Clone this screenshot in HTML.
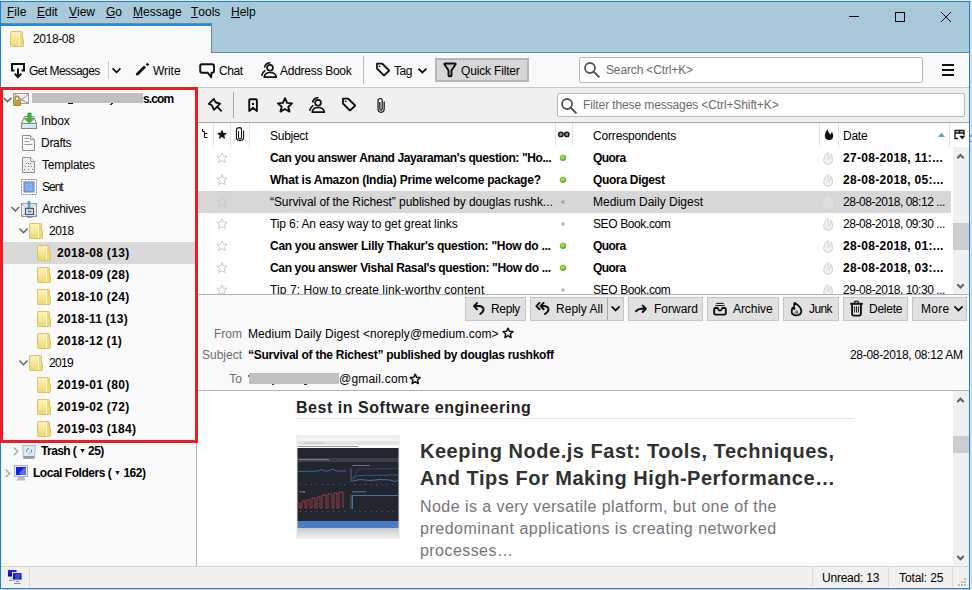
<!DOCTYPE html>
<html><head><meta charset="utf-8">
<style>
*{margin:0;padding:0;box-sizing:border-box}
html,body{width:972px;height:590px;overflow:hidden;background:#fff;font-family:"Liberation Sans",sans-serif;font-size:12px;color:#000}
.a{position:absolute}
.t{position:absolute;white-space:nowrap;line-height:14px;font-size:12px}
.b{font-weight:bold}
u{text-decoration:none;border-bottom:1px solid #000;display:inline-block;line-height:10px}
.tri{font-size:7px;vertical-align:2px}
</style></head><body>
<div class="a" style="left:0px;top:0px;width:972px;height:590px;background:#d9d9d9;"></div>
<div class="a" style="left:970px;top:0px;width:2px;height:590px;background:#dedede;"></div>
<div class="a" style="left:970px;top:135px;width:2px;height:2px;background:#5a9ad8;"></div>
<div class="a" style="left:970px;top:141px;width:2px;height:1px;background:#5a9ad8;"></div>
<div class="a" style="left:0px;top:0px;width:970px;height:1px;background:#e9e4df;"></div>
<div class="a" style="left:0px;top:1px;width:970px;height:588px;background:#1883d7;"></div>
<div class="a" style="left:0px;top:589px;width:972px;height:1px;background:#d6cfc8;"></div>
<div class="a" style="left:1px;top:587px;width:968px;height:1px;background:#faf6f1;"></div>
<div class="a" style="left:1px;top:2px;width:968px;height:50px;background:#a7c9da;"></div>
<div class="a" style="left:1px;top:23px;width:211px;height:1px;background:#6f8a99;"></div>
<div class="a" style="left:1px;top:24px;width:210px;height:2px;background:#2589e0;"></div>
<div class="a" style="left:1px;top:26px;width:210px;height:27px;background:#f9f9f9;"></div>
<div class="a" style="left:211px;top:23px;width:1px;height:30px;background:#6f8794;"></div>
<div class="a" style="left:211px;top:52px;width:758px;height:1px;background:#6f8794;"></div>
<div class="a" style="left:1px;top:53px;width:968px;height:34px;background:#f9f9f9;"></div>
<div class="a" style="left:108px;top:61px;width:1px;height:18px;background:#c9c9c9;"></div>
<div class="a" style="left:363px;top:56px;width:1px;height:28px;background:#bdbdbd;"></div>
<div class="a" style="left:435px;top:58px;width:94px;height:24px;background:#d7d7d7;border:2px solid #b6b6b6"></div>
<div class="a" style="left:579px;top:57px;width:344px;height:26px;background:#fff;border:1px solid #b9b9b9;border-radius:2px"></div>
<div class="a" style="left:942px;top:64px;width:12px;height:2px;background:#111;"></div>
<div class="a" style="left:942px;top:69px;width:12px;height:2px;background:#111;"></div>
<div class="a" style="left:942px;top:74px;width:12px;height:2px;background:#111;"></div>
<div class="a" style="left:1px;top:87px;width:195px;height:479px;background:#fafafa;"></div>
<div class="a" style="left:196px;top:87px;width:1px;height:479px;background:#a8b7c5;"></div>
<div class="a" style="left:3px;top:242px;width:192px;height:22px;background:#d9d9d9;"></div>
<div class="a" style="left:32px;top:93px;width:111px;height:10px;background:#c0c0c0;"></div>
<div class="a" style="left:68px;top:103px;width:5px;height:1px;background:#111;"></div>
<div class="a" style="left:111px;top:103px;width:2px;height:1px;background:#222;"></div>
<div class="a" style="left:110px;top:104px;width:2px;height:1px;background:#333;"></div>
<div class="a" style="left:197px;top:87px;width:772px;height:1px;background:#c9c9c9;"></div>
<div class="a" style="left:197px;top:88px;width:772px;height:34px;background:#f0f0f0;"></div>
<div class="a" style="left:233px;top:92px;width:1px;height:26px;background:#a3a3a3;"></div>
<div class="a" style="left:557px;top:93px;width:408px;height:24px;background:#fff;border:1px solid #b9b9b9;border-radius:2px"></div>
<div class="a" style="left:197px;top:122px;width:772px;height:1px;background:#a3a3a3;"></div>
<div class="a" style="left:197px;top:123px;width:772px;height:171px;background:#fff;"></div>
<div class="a" style="left:213px;top:123px;width:1px;height:24px;background:#e3e3e3;"></div>
<div class="a" style="left:230px;top:123px;width:1px;height:24px;background:#e3e3e3;"></div>
<div class="a" style="left:249px;top:123px;width:1px;height:24px;background:#e3e3e3;"></div>
<div class="a" style="left:555px;top:123px;width:1px;height:24px;background:#e3e3e3;"></div>
<div class="a" style="left:572px;top:123px;width:1px;height:24px;background:#e3e3e3;"></div>
<div class="a" style="left:819px;top:123px;width:1px;height:24px;background:#e3e3e3;"></div>
<div class="a" style="left:838px;top:123px;width:1px;height:24px;background:#e3e3e3;"></div>
<div class="a" style="left:949px;top:123px;width:1px;height:24px;background:#e3e3e3;"></div>
<div class="a" style="left:197px;top:191px;width:754px;height:22px;background:#d7d7d7;"></div>
<div class="a" style="left:953px;top:147px;width:16px;height:147px;background:#f0f0f0;"></div>
<div class="a" style="left:953px;top:223px;width:16px;height:27px;background:#cdcdcd;"></div>
<div class="a" style="left:197px;top:294px;width:772px;height:1px;background:#a8b7c5;"></div>
<div class="a" style="left:197px;top:295px;width:772px;height:95px;background:#f9f9f9;"></div>
<div class="a" style="left:465px;top:297px;width:61px;height:24px;background:#e1e1e1;border:1px solid #c6c6c6"></div>
<div class="a" style="left:530px;top:297px;width:94px;height:24px;background:#e1e1e1;border:1px solid #c6c6c6"></div>
<div class="a" style="left:628px;top:297px;width:75px;height:24px;background:#e1e1e1;border:1px solid #c6c6c6"></div>
<div class="a" style="left:707px;top:297px;width:72px;height:24px;background:#e1e1e1;border:1px solid #c6c6c6"></div>
<div class="a" style="left:783px;top:297px;width:56px;height:24px;background:#e1e1e1;border:1px solid #c6c6c6"></div>
<div class="a" style="left:843px;top:297px;width:65px;height:24px;background:#e1e1e1;border:1px solid #c6c6c6"></div>
<div class="a" style="left:912px;top:297px;width:55px;height:24px;background:#e1e1e1;border:1px solid #c6c6c6"></div>
<div class="a" style="left:607px;top:298px;width:1px;height:22px;background:#a8a8a8;"></div>
<div class="a" style="left:249px;top:373px;width:90px;height:11px;background:#c0c0c0;"></div>
<div class="a" style="left:272px;top:384px;width:2px;height:1px;background:#333;"></div>
<div class="a" style="left:304px;top:384px;width:3px;height:1px;background:#333;"></div>
<div class="a" style="left:248px;top:375px;width:1px;height:2px;background:#555;"></div>
<div class="a" style="left:197px;top:390px;width:772px;height:1px;background:#a8b7c5;"></div>
<div class="a" style="left:197px;top:391px;width:772px;height:175px;background:#fff;"></div>
<div class="a" style="left:953px;top:391px;width:16px;height:175px;background:#f0f0f0;"></div>
<div class="a" style="left:953px;top:436px;width:16px;height:17px;background:#cdcdcd;"></div>
<div class="a" style="left:296px;top:418px;width:558px;height:1px;background:#e6e6e6;"></div>
<div class="a" style="left:297px;top:436px;width:102px;height:102px;background:#f3f3f3;"></div>
<div class="a" style="left:297px;top:441px;width:102px;height:4px;background:#e4e4e4;"></div>
<div class="a" style="left:297px;top:445px;width:102px;height:3px;background:#fbfbfb;"></div>
<div class="a" style="left:297px;top:448px;width:102px;height:73px;background:#23262f;"></div>
<div class="a" style="left:297px;top:458px;width:102px;height:4px;background:#3b3f4b;"></div>
<div class="a" style="left:297px;top:521px;width:102px;height:7px;background:#4b7cc6;"></div>
<div class="a" style="left:297px;top:528px;width:102px;height:10px;background:#d6d6d6;background:linear-gradient(#c9c9c9,#f1f1f1)"></div>
<div class="a" style="left:1px;top:566px;width:968px;height:1px;background:#d5d5d5;"></div>
<div class="a" style="left:1px;top:567px;width:968px;height:20px;background:#f0f0f0;"></div>
<div class="a" style="left:29px;top:567px;width:1px;height:20px;background:#dcdcdc;"></div>
<div class="a" style="left:812px;top:567px;width:1px;height:20px;background:#dcdcdc;"></div>
<div class="a" style="left:888px;top:567px;width:1px;height:20px;background:#dcdcdc;"></div>
<div class="a" style="left:952px;top:567px;width:1px;height:20px;background:#dcdcdc;"></div>
<div class="t" style="left:7px;top:5px;"><u>F</u>ile</div>
<div class="t" style="left:37px;top:5px;"><u>E</u>dit</div>
<div class="t" style="left:69px;top:5px;"><u>V</u>iew</div>
<div class="t" style="left:106px;top:5px;"><u>G</u>o</div>
<div class="t" style="left:133px;top:5px;"><u>M</u>essage</div>
<div class="t" style="left:191px;top:5px;"><u>T</u>ools</div>
<div class="t" style="left:231px;top:5px;"><u>H</u>elp</div>
<div class="t" style="left:33px;top:32px;letter-spacing:-0.368px;">2018-08</div>
<div class="t" style="left:29px;top:64px;letter-spacing:-0.545px;">Get Messages</div>
<div class="t" style="left:153px;top:64px;letter-spacing:-0.050px;">Write</div>
<div class="t" style="left:219px;top:64px;letter-spacing:-0.399px;">Chat</div>
<div class="t" style="left:280px;top:64px;letter-spacing:-0.273px;">Address Book</div>
<div class="t" style="left:394px;top:64px;letter-spacing:-0.400px;">Tag</div>
<div class="t" style="left:461px;top:64px;letter-spacing:-0.165px;">Quick Filter</div>
<div class="t" style="left:606px;top:63px;color:#6b6b6b;letter-spacing:-0.143px;">Search &lt;Ctrl+K&gt;</div>
<div class="t" style="left:583px;top:98px;color:#6b6b6b;letter-spacing:-0.108px;">Filter these messages &lt;Ctrl+Shift+K&gt;</div>
<div class="t b" style="left:143px;top:92px;letter-spacing:-0.900px;">s.com</div>
<div class="t" style="left:41px;top:114px;letter-spacing:-0.150px;">Inbox</div>
<div class="t" style="left:41px;top:136px;letter-spacing:-0.280px;">Drafts</div>
<div class="t" style="left:42px;top:158px;letter-spacing:-0.225px;">Templates</div>
<div class="t" style="left:42px;top:180px;letter-spacing:-1.000px;">Sent</div>
<div class="t" style="left:42px;top:202px;letter-spacing:-0.286px;">Archives</div>
<div class="t" style="left:49px;top:224px;letter-spacing:-0.533px;">2018</div>
<div class="t b" style="left:57px;top:246px;letter-spacing:0.310px;">2018-08 (13)</div>
<div class="t b" style="left:57px;top:268px;letter-spacing:0.310px;">2018-09 (28)</div>
<div class="t b" style="left:57px;top:290px;letter-spacing:0.310px;">2018-10 (24)</div>
<div class="t b" style="left:57px;top:312px;letter-spacing:0.237px;">2018-11 (13)</div>
<div class="t b" style="left:57px;top:334px;letter-spacing:0.280px;">2018-12 (1)</div>
<div class="t" style="left:49px;top:356px;letter-spacing:-0.667px;">2019</div>
<div class="t b" style="left:57px;top:378px;letter-spacing:0.310px;">2019-01 (80)</div>
<div class="t b" style="left:57px;top:400px;letter-spacing:0.310px;">2019-02 (72)</div>
<div class="t b" style="left:57px;top:422px;letter-spacing:0.299px;">2019-03 (184)</div>
<div class="t b" style="left:41px;top:444px;letter-spacing:-0.584px;">Trash ( <span class="tri">&#9660;</span> 25)</div>
<div class="t b" style="left:33px;top:466px;letter-spacing:-0.476px;">Local Folders ( <span class="tri">&#9660;</span> 162)</div>
<div class="t" style="left:270px;top:129px;letter-spacing:-0.267px;">Subject</div>
<div class="t" style="left:593px;top:129px;letter-spacing:-0.169px;">Correspondents</div>
<div class="t" style="left:843px;top:129px;letter-spacing:-0.266px;">Date</div>
<div class="t" style="left:491px;top:302px;letter-spacing:-0.350px;">Reply</div>
<div class="t" style="left:556px;top:302px;letter-spacing:0.027px;">Reply All</div>
<div class="t" style="left:654px;top:302px;letter-spacing:0.000px;">Forward</div>
<div class="t" style="left:733px;top:302px;letter-spacing:-0.066px;">Archive</div>
<div class="t" style="left:809px;top:302px;letter-spacing:-0.601px;">Junk</div>
<div class="t" style="left:869px;top:302px;letter-spacing:-0.240px;">Delete</div>
<div class="t" style="left:921px;top:302px;letter-spacing:0.267px;">More</div>
<div class="t" style="left:242px;top:327px;color:#6d6d6d;transform:translateX(-100%)">From</div>
<div class="t" style="left:242px;top:348px;color:#6d6d6d;transform:translateX(-100%)">Subject</div>
<div class="t" style="left:242px;top:372px;color:#6d6d6d;transform:translateX(-100%)">To</div>
<div class="t" style="left:248px;top:327px;letter-spacing:0.077px;">Medium Daily Digest &lt;noreply@medium.com&gt;</div>
<div class="t b" style="left:248px;top:348px;letter-spacing:-0.249px;">“Survival of the Richest” published by douglas rushkoff</div>
<div class="t" style="left:339px;top:372px;letter-spacing:0.211px;">@gmail.com</div>
<div class="t" style="left:850px;top:348px;letter-spacing:-0.306px;">28-08-2018, 08:12 AM</div>
<div class="t" style="left:822px;top:571px;letter-spacing:-0.222px;">Unread: 13</div>
<div class="t" style="left:899px;top:571px;letter-spacing:-0.125px;">Total: 25</div>
<div class="a" style="left:197px;top:147px;width:756px;height:147px;overflow:hidden">
<div class="t b" style="left:73px;top:4px;letter-spacing:-0.386px;">Can you answer Anand Jayaraman&#x27;s question: &quot;Ho...</div>
<div class="t b" style="left:396px;top:4px;letter-spacing:-0.550px;">Quora</div>
<div class="t b" style="left:646px;top:4px;letter-spacing:0.295px;">27-08-2018, 11:...</div>
<div class="t b" style="left:73px;top:26px;letter-spacing:-0.227px;">What is Amazon (India) Prime welcome package?</div>
<div class="t b" style="left:396px;top:26px;letter-spacing:-0.310px;">Quora Digest</div>
<div class="t b" style="left:646px;top:26px;letter-spacing:0.294px;">28-08-2018, 05:...</div>
<div class="t" style="left:73px;top:48px;letter-spacing:-0.063px;">“Survival of the Richest” published by douglas rushk...</div>
<div class="t" style="left:396px;top:48px;letter-spacing:0.000px;">Medium Daily Digest</div>
<div class="t" style="left:646px;top:48px;letter-spacing:-0.450px;">28-08-2018, 08:12 ...</div>
<div class="t" style="left:73px;top:70px;letter-spacing:-0.111px;">Tip 6: An easy way to get great links</div>
<div class="t" style="left:396px;top:70px;letter-spacing:-0.382px;">SEO Book.com</div>
<div class="t" style="left:646px;top:70px;letter-spacing:-0.450px;">28-08-2018, 09:30 ...</div>
<div class="t b" style="left:73px;top:92px;letter-spacing:-0.288px;">Can you answer Lilly Thakur&#x27;s question: &quot;How do ...</div>
<div class="t b" style="left:396px;top:92px;letter-spacing:-0.550px;">Quora</div>
<div class="t b" style="left:646px;top:92px;letter-spacing:0.294px;">28-08-2018, 01:...</div>
<div class="t b" style="left:73px;top:114px;letter-spacing:-0.348px;">Can you answer Vishal Rasal&#x27;s question: &quot;How do ...</div>
<div class="t b" style="left:396px;top:114px;letter-spacing:-0.550px;">Quora</div>
<div class="t b" style="left:646px;top:114px;letter-spacing:0.294px;">28-08-2018, 03:...</div>
<div class="t" style="left:73px;top:136px;letter-spacing:0.100px;">Tip 7: How to create link-worthy content</div>
<div class="t" style="left:396px;top:136px;letter-spacing:-0.382px;">SEO Book.com</div>
<div class="t" style="left:646px;top:136px;letter-spacing:-0.450px;">29-08-2018, 10:30 ...</div>
</div>
<div class="t b" style="left:296px;top:399px;font-size:16px;line-height:18px;color:#222;letter-spacing:0.53px">Best in Software engineering</div>
<div class="t b" style="left:420px;top:438px;font-size:20px;line-height:27px;color:#313131;letter-spacing:0.52px">Keeping Node.js Fast: Tools, Techniques,<br>And Tips For Making High-Performance<span style="letter-spacing:2px">…</span></div>
<div class="t" style="left:420px;top:496px;font-size:16px;line-height:22px;color:#757575;letter-spacing:0.44px">Node is a very versatile platform, but one of the<br><span style="letter-spacing:0.5px">predominant applications is creating networked</span><br>processes<span style="letter-spacing:1px">…</span></div>
<svg class="a" style="left:0;top:0;position:absolute" width="972" height="590" viewBox="0 0 972 590">
<defs>
 <linearGradient id="fg" x1="0" y1="0" x2="0" y2="1"><stop offset="0" stop-color="#fff3bf"/><stop offset="1" stop-color="#f0d873"/></linearGradient>
 <symbol id="fold" viewBox="0 0 14 16" width="14" height="16">
  <path d="M0.5 1.5 Q0.5 0.5 1.5 0.5 H11.5 Q12.5 0.5 12.5 1.5 V7 L13.5 8.2 V14.5 Q13.5 15.5 12.5 15.5 H1.5 Q0.5 15.5 0.5 14.5 Z" fill="#f1d978" stroke="#dcc26a" stroke-width="1"/>
  <rect x="1.2" y="1.2" width="7.8" height="13.6" fill="url(#fg)"/>
  <rect x="9" y="1" width="1" height="14" fill="#fff7d2"/>
 </symbol>
 <symbol id="person" viewBox="0 0 16 16" width="16" height="16">
  <circle cx="9" cy="5.8" r="2.9" fill="none" stroke="#111" stroke-width="1.7"/>
  <path d="M3.2 15.2 Q3.8 10.5 9.2 10.5 Q14.6 10.5 15.3 15.2 Z" fill="none" stroke="#111" stroke-width="1.7" stroke-linejoin="round"/>
  <path d="M3.6 5.6 Q4.2 0.9 9.4 0.6" fill="none" stroke="#111" stroke-width="1.6"/>
  <path d="M0.6 13.8 Q1.4 10.3 4.3 8.4" fill="none" stroke="#111" stroke-width="1.6"/>
 </symbol>
 <symbol id="tag" viewBox="0 0 14 14" width="14" height="14">
  <path d="M1 1 H6 L13.2 8 L8 13.2 L1 6 Z" fill="none" stroke="#111" stroke-width="1.8" stroke-linejoin="round"/>
  <circle cx="3.6" cy="3.8" r="0.9" fill="#111"/>
 </symbol>
 <symbol id="mag" viewBox="0 0 18 18" width="18" height="18">
  <circle cx="6" cy="6" r="5" fill="none" stroke="#555" stroke-width="1.8"/>
  <path d="M9.6 9.6 L14.8 14.8" stroke="#555" stroke-width="2" stroke-linecap="round"/>
 </symbol>
 <symbol id="hstar" viewBox="0 0 12 12" width="12" height="12">
  <path d="M6 0.8 L7.5 4.1 L11.2 4.4 L8.4 6.8 L9.3 10.6 L6 8.6 L2.7 10.6 L3.6 6.8 L0.8 4.4 L4.5 4.1 Z" fill="none" stroke="#c9c9c9" stroke-width="1" stroke-linejoin="round"/>
 </symbol>
 <symbol id="junkrow" viewBox="0 0 12 14" width="12" height="14">
  <path d="M5 0.6 Q1 3 0.7 7.5 Q0.7 12.3 5 12.3 Q9.5 12.3 9.5 7.5 Q9.5 4 7.5 2 L7 6.5 Q5.5 8.2 5.3 6 Z" fill="#000" fill-opacity="0.06" stroke="#cfcfcf" stroke-width="1" stroke-linejoin="round"/>
 </symbol>
 <symbol id="ostar" viewBox="0 0 12 12" width="12" height="12">
  <path d="M6 0.9 L7.4 4.1 L10.9 4.4 L8.3 6.8 L9.1 10.4 L6 8.5 L2.9 10.4 L3.7 6.8 L1.1 4.4 L4.6 4.1 Z" fill="none" stroke="#111" stroke-width="1.5" stroke-linejoin="round"/>
 </symbol>
</defs>

<!-- window controls -->
<path d="M849 16.5 H859" stroke="#000" stroke-width="1"/>
<rect x="895.5" y="12.5" width="9" height="9" fill="none" stroke="#000" stroke-width="1"/>
<path d="M941 12 L951 22 M951 12 L941 22" stroke="#000" stroke-width="1"/>

<!-- tab folder -->
<use href="#fold" x="10" y="31"/>

<!-- toolbar icons -->
<path d="M14.5 70.5 H12 V64 H24 V70.5 H21.5" fill="none" stroke="#111" stroke-width="2"/>
<path d="M18 68.5 V77" stroke="#111" stroke-width="2"/>
<path d="M14.8 73.8 L18 77 L21.2 73.8" fill="none" stroke="#111" stroke-width="2"/>
<path d="M112.6 68.4 L116.5 72.3 L120.4 68.4" fill="none" stroke="#111" stroke-width="1.8"/>
<path d="M137 74.5 L145 66.5" stroke="#111" stroke-width="2.8"/>
<path d="M135.8 75.6 L136.3 73 L138.3 75 Z" fill="#111"/>
<rect x="146.2" y="63.2" width="2.6" height="2.6" fill="#111" transform="rotate(45 147.5 64.5)"/>
<path d="M202 64.2 H212.2 Q214 64.2 214 66 V71 Q214 72.7 212.2 72.7 H211.5 L211.2 77.2 L207.6 72.7 H202 Q200.2 72.7 200.2 71 V66 Q200.2 64.2 202 64.2 Z" fill="none" stroke="#111" stroke-width="1.9" stroke-linejoin="round"/>
<use href="#person" x="261" y="62"/>
<use href="#tag" x="376" y="62.5"/>
<path d="M418.4 68.6 L422.4 72.5 L426.4 68.6" fill="none" stroke="#111" stroke-width="1.8"/>
<path d="M444.5 64.5 Q443.8 63.5 445.2 63.5 H454.8 Q456.2 63.5 455.5 64.5 L451.5 70.5 V75.5 Q451.5 76.3 450.7 76.3 H449.3 Q448.5 76.3 448.5 75.5 V70.5 Z" fill="#c4c4c4" stroke="#111" stroke-width="1.9" stroke-linejoin="round"/>
<use href="#mag" x="584" y="62"/>
<use href="#mag" x="561" y="98"/>

<!-- folder pane icons -->
<path d="M3.6 97.8 L7.5 101.6 L11.4 97.8" fill="none" stroke="#606060" stroke-width="1.5"/>
<rect x="13.5" y="93.5" width="15" height="10" fill="#f2f2f2" stroke="#9b9b9b"/>
<path d="M14 94 L21 99.5 M28 94 Q25 98.5 21 99.5 L28 103" fill="none" stroke="#8d8d8d" stroke-width="1"/>
<path d="M15 100.2 V98.2 Q15 96.3 17 96.3 Q19 96.3 19 98.2 V100.2" fill="none" stroke="#a98c2e" stroke-width="1.4"/>
<rect x="13.3" y="100" width="7.6" height="6" fill="#a88a2b"/>
<rect x="14" y="101.3" width="6.2" height="1" fill="#d7bb62"/>
<rect x="14" y="103.4" width="6.2" height="1" fill="#d7bb62"/>
<!-- inbox -->
<path d="M24.5 116.5 H33.5 L36.5 123.5 H21.5 Z" fill="#eaeef2" stroke="#8a8a8a" stroke-width="1"/>
<rect x="21.5" y="123.5" width="15" height="5" fill="#dce6f0" stroke="#868686"/>
<path d="M24.2 118.5 H27.8 V113 H31.2 V118.5 H34.2 L29.5 123.2 Z" fill="#3fb33c" stroke="#2e9a2b" stroke-width="0.6"/>
<!-- drafts -->
<path d="M22.5 135.5 H30.5 L34.5 139.5 V150.5 H22.5 Z" fill="#f7f7f7" stroke="#8f8f8f"/>
<path d="M30.5 135.5 V139.5 H34.5" fill="#e4e4e4" stroke="#9a9a9a"/>
<path d="M24.5 138.5 H29 M24.5 141.5 H29 M24.5 144.5 H32.5" stroke="#999" stroke-width="1"/>
<!-- templates -->
<path d="M22.5 157.5 H30.5 L34.5 161.5 V172.5 H22.5 Z" fill="#ededed" stroke="#8f8f8f"/>
<path d="M30.5 157.5 V161.5 H34.5" fill="#fafafa" stroke="#9a9a9a"/>
<g fill="#777"><rect x="26" y="163" width="1" height="1"/><rect x="28" y="163" width="1" height="1"/><rect x="30" y="163" width="1" height="1"/><rect x="25" y="166" width="1" height="1"/><rect x="28" y="166" width="1" height="1"/><rect x="31" y="166" width="1" height="1"/><rect x="24" y="169" width="1" height="1"/><rect x="28" y="169" width="1" height="1"/><rect x="32" y="169" width="1" height="1"/></g>
<!-- sent -->
<rect x="21.5" y="179.5" width="15" height="15" fill="#fdfdfd" stroke="#8c8c8c" stroke-dasharray="2 1"/>
<rect x="24" y="182" width="10" height="10" fill="#7ea8e4" stroke="#5586d2" stroke-width="1"/>
<rect x="26.5" y="184.5" width="5" height="5" fill="none" stroke="#8fb6ea" stroke-width="0.8"/>
<!-- archives -->
<path d="M3.5 207 L7.3 211 L11.2 207" fill="none" stroke="#606060" stroke-width="1.4" transform="translate(8 0)"/>
<rect x="21.5" y="203.5" width="15" height="13" fill="#f0f0f0" stroke="#9a9a9a"/>
<path d="M22 204 L29 210 L36 204 M22 216 L27 211 M36 216 L31 211" fill="none" stroke="#a0a0a0" stroke-width="0.8"/>
<rect x="27.5" y="201" width="3" height="8" fill="#4aa7c9"/>
<rect x="25.5" y="208.5" width="8" height="6" fill="#e8e8e8" stroke="#555" stroke-width="1.2"/>
<rect x="27.5" y="210.5" width="4" height="2" fill="#4a9ac0"/>
<path d="M27 216.5 Q29.5 218 33 216.5" stroke="#2c7fb0" stroke-width="1.2" fill="none"/>
<!-- 2018 / 2019 chevrons -->
<path d="M19.5 228.5 L23.5 232.7 L27.5 228.5" fill="none" stroke="#606060" stroke-width="1.4"/>
<path d="M19.5 360.5 L23.5 364.7 L27.5 360.5" fill="none" stroke="#606060" stroke-width="1.4"/>
<use href="#fold" x="29" y="223"/>
<use href="#fold" x="37" y="245"/>
<use href="#fold" x="37" y="267"/>
<use href="#fold" x="37" y="289"/>
<use href="#fold" x="37" y="311"/>
<use href="#fold" x="37" y="333"/>
<use href="#fold" x="29" y="355"/>
<use href="#fold" x="37" y="377"/>
<use href="#fold" x="37" y="399"/>
<use href="#fold" x="37" y="421"/>
<!-- trash -->
<path d="M13.8 447.6 L17.8 451.4 L13.8 455.2" fill="none" stroke="#a8a8a8" stroke-width="1.4"/>
<path d="M22.5 445.5 H35.5 L34.3 458.5 H23.7 Z" fill="#dcebf3" stroke="#a9bcc8"/>
<rect x="23.5" y="456" width="11" height="2.5" fill="#9a9a9a"/>
<path d="M26.5 452 Q26 448.5 29 448.3 M31.5 449.5 Q32.5 452.5 29.5 453.5" fill="none" stroke="#5b8fc4" stroke-width="1"/>
<!-- local folders -->
<path d="M5.6 469.6 L9.6 473.5 L5.6 477.3" fill="none" stroke="#a8a8a8" stroke-width="1.4"/>
<rect x="14.5" y="465.5" width="13" height="11" fill="#e9e9e9" stroke="#b0b0b0"/>
<rect x="16" y="467" width="10" height="8" fill="#1b1be0"/>
<path d="M19 473 L24 468 H26 V475 H21 Z" fill="#4f6ff0"/>
<path d="M18 477 H24 L25.5 480.5 H16.5 Z" fill="#bdbdbd"/>

<!-- quick filter icons -->
<path d="M213.9 98.8 L208.8 103.9 Q211.6 104.6 212.3 106.2 Q213 108 213.9 109.9 L220.2 103.7 Q217.2 103 215.6 102.1 Q214.5 101 213.9 98.8 Z" fill="none" stroke="#111" stroke-width="1.8" stroke-linejoin="round"/>
<path d="M217.6 107.2 L221.1 110.8" stroke="#111" stroke-width="1.8" stroke-linecap="round"/>
<path d="M249.2 111 V100.2 Q249.2 99.2 250.2 99.2 H255.9 Q256.9 99.2 256.9 100.2 V111 L253 107.8 Z" fill="none" stroke="#111" stroke-width="1.9" stroke-linejoin="round"/>
<rect x="252" y="103" width="2" height="2" fill="#111"/>
<path d="M285 98.2 L287.1 102.9 L292.1 103.4 L288.3 106.7 L289.5 111.6 L285 109 L280.5 111.6 L281.7 106.7 L277.9 103.4 L282.9 102.9 Z" fill="none" stroke="#111" stroke-width="1.9" stroke-linejoin="round"/>
<use href="#person" x="309" y="97"/>
<use href="#tag" x="342" y="97.5"/>
<path d="M379.8 102 V108.6 Q379.8 110.2 381 110.2 Q382.2 110.2 382.2 108.6 V100.6 Q382.2 98.5 380.9 98.5 Q378 98.5 378 101 V108.8 Q378 112.3 381 112.3 Q384.2 112.3 384.2 108.8 V101.5" fill="none" stroke="#111" stroke-width="1.2"/>

<!-- list header icons -->
<path d="M202.5 129 V131.5 H204.5 V137.5 H207.5 M204.5 133.5 H207.5" fill="none" stroke="#111" stroke-width="1"/>
<path d="M222 129.4 L223.4 132.8 L227 133.1 L224.3 135.5 L225.1 139 L222 137.1 L218.9 139 L219.7 135.5 L217 133.1 L220.6 132.8 Z" fill="#111"/>
<path d="M238.5 131 V137.3 Q238.5 139 240 139 Q241.5 139 241.5 137.3 V129.8 Q241.5 127.6 239.9 127.6 Q236.4 127.6 236.4 130.3 V137.6 Q236.4 140.6 240 140.6 Q243.6 140.6 243.6 137.6 V130.6" fill="none" stroke="#111" stroke-width="1.1"/>
<circle cx="560.8" cy="134.4" r="2.2" fill="#8a8a8a" stroke="#111" stroke-width="1.3"/>
<circle cx="566.8" cy="134.4" r="2.2" fill="#8a8a8a" stroke="#111" stroke-width="1.3"/>
<path d="M563 134 H564.6" stroke="#111" stroke-width="1.2"/>
<path d="M827.4 129.4 Q824.8 132 824.8 135.6 Q824.8 140 829 140 Q833.2 140 833.2 135.8 Q833.2 133.6 831.9 131.8 L830.4 134.8 Q828.6 132.6 827.4 129.4 Z" fill="#111"/>
<path d="M937.8 137 L941.5 132.8 L945.2 137 Z" fill="#5ea3d6"/>
<path d="M955 135.5 V130.5 H964 V135.2 M955 133 H964 M959.5 130.5 V133 M955 135.5 V138.5 H958" fill="none" stroke="#111" stroke-width="1.3"/>
<path d="M959.3 135.7 H965.2 L962.25 139.4 Z" fill="#111"/>
<!-- scroll arrows -->
<path d="M957.3 158.3 L960.5 155 L963.7 158.3" fill="none" stroke="#606060" stroke-width="2"/>
<path d="M957.3 284.3 L960.5 287.6 L963.7 284.3" fill="none" stroke="#606060" stroke-width="2"/>
<path d="M957.3 402 L960.5 398.7 L963.7 402" fill="none" stroke="#606060" stroke-width="2"/>
<path d="M957.3 556 L960.5 559.3 L963.7 556" fill="none" stroke="#606060" stroke-width="2"/>

<!-- rows -->
<use href="#hstar" x="216" y="152"/>
<use href="#hstar" x="216" y="174"/>
<use href="#hstar" x="216" y="196"/>
<use href="#hstar" x="216" y="218"/>
<use href="#hstar" x="216" y="240"/>
<use href="#hstar" x="216" y="262"/>
<g clip-path="inset(0 0 0 0)"><use href="#hstar" x="216" y="284"/></g>
<defs><radialGradient id="gd" cx="0.4" cy="0.35" r="0.7"><stop offset="0" stop-color="#b6ec6a"/><stop offset="1" stop-color="#4fa81a"/></radialGradient></defs>
<circle cx="563" cy="157.8" r="2.9" fill="url(#gd)" stroke="#58a320" stroke-width="0.6"/>
<circle cx="563" cy="179.8" r="2.9" fill="url(#gd)" stroke="#58a320" stroke-width="0.6"/>
<circle cx="563" cy="202" r="1.8" fill="#a5a5a5"/>
<circle cx="563" cy="224" r="1.8" fill="#b5b5b5"/>
<circle cx="563" cy="245.8" r="2.9" fill="url(#gd)" stroke="#58a320" stroke-width="0.6"/>
<circle cx="563" cy="267.8" r="2.9" fill="url(#gd)" stroke="#58a320" stroke-width="0.6"/>
<circle cx="563" cy="290" r="1.8" fill="#b5b5b5"/>
<use href="#junkrow" x="823" y="152"/>
<use href="#junkrow" x="823" y="174"/>
<path d="M828 152.6 Q824 155 823.7 159.5 Q823.7 164.3 828 164.3 Q832.5 164.3 832.5 159.5 Q832.5 156 830.5 154 L830 158.5 Q828.5 160.2 828.3 158 Z" transform="translate(0 44)" fill="#dcdcdc" stroke="#e4e4e4" stroke-width="1" stroke-linejoin="round"/>
<use href="#junkrow" x="823" y="218"/>
<use href="#junkrow" x="823" y="240"/>
<use href="#junkrow" x="823" y="262"/>
<use href="#junkrow" x="823" y="284"/>
<rect x="197" y="294" width="756" height="1" fill="#a8b7c5"/>
<rect x="197" y="295" width="756" height="2" fill="#f9f9f9"/>

<!-- buttons icons -->
<path d="M477 303 L474 306.1 L477 309.2 M474.2 306.1 H478.5 Q483.5 306.1 483.5 309.6 Q483.5 311.8 480.2 314" fill="none" stroke="#111" stroke-width="2" stroke-linecap="round" stroke-linejoin="round"/>
<path d="M539.5 302.9 L536.4 306.1 L539.5 309.3 M543.6 302.9 L540.6 306.1 L543.6 309.3 M540.8 306.1 H543.5 Q548.5 306.1 548.5 309.6 Q548.5 311.8 545 314" fill="none" stroke="#111" stroke-width="2" stroke-linecap="round" stroke-linejoin="round"/>
<path d="M636 311.2 Q638 308.8 641.5 308.8 H645.6 M642.7 305.6 L645.9 308.8 L642.7 312" fill="none" stroke="#111" stroke-width="2" stroke-linecap="round" stroke-linejoin="round"/>
<path d="M611.6 306.4 L615.6 310.4 L619.6 306.4" fill="none" stroke="#111" stroke-width="1.9"/>
<path d="M716.2 303.4 H723.8 M715.2 305.6 H724.8" stroke="#111" stroke-width="1"/>
<path d="M714.2 309.2 Q714.2 308 715.4 308 H717.6 Q718.6 310.6 720 310.6 Q721.4 310.6 722.4 308 H724.6 Q725.8 308 725.8 309.2 V313.4 Q725.8 314.6 724.6 314.6 H715.4 Q714.2 314.6 714.2 313.4 Z" fill="none" stroke="#111" stroke-width="1.9" stroke-linejoin="round"/>
<path d="M794.5 302.8 Q801.4 307 801.3 311 Q801.2 315.3 796.5 315.3 Q791.8 315.3 791.7 311.5 Q791.6 309 792.8 307.6 L794.3 309.2 Q793.9 305.3 794.5 302.8 Z" fill="none" stroke="#111" stroke-width="1.8" stroke-linejoin="round"/>
<path d="M794.2 313.6 Q794.6 311.2 797.2 309.8 Q798.8 312 798.2 313.8 Z" fill="#777"/>
<path d="M850.2 303.8 H862.8" stroke="#111" stroke-width="2"/>
<path d="M854.3 302.8 Q854.5 301.2 856.5 301.2 Q858.5 301.2 858.7 302.8" fill="none" stroke="#111" stroke-width="1.3"/>
<path d="M852.1 304.5 V313.8 Q852.1 315.6 854 315.6 H859 Q860.9 315.6 860.9 313.8 V304.5" fill="none" stroke="#111" stroke-width="1.9"/>
<path d="M854.6 306.3 V312.5 M856.5 306.3 V312.5 M858.4 306.3 V312.5" stroke="#111" stroke-width="0.9"/>
<path d="M954.4 306.3 L958.5 310.4 L962.6 306.3" fill="none" stroke="#111" stroke-width="1.8"/>
<!-- header stars -->
<use href="#ostar" x="502" y="327.2"/>
<use href="#ostar" x="409.2" y="373.2"/>

<!-- image chart details -->
<rect x="297" y="436" width="102" height="102" fill="none" stroke="#e2e2e2" stroke-width="1"/>
<rect x="298" y="446" width="60" height="0.8" fill="#7a7a7a"/>
<rect x="304" y="442" width="20" height="2" fill="#d0d0d0"/>
<rect x="299" y="459.3" width="30" height="0.8" fill="#8d93a3"/>
<rect x="352" y="465" width="18" height="0.7" fill="#8d93a3"/>
<rect x="352" y="491.5" width="14" height="0.7" fill="#8d93a3"/>
<rect x="299" y="491.5" width="6" height="0.7" fill="#8d93a3"/>
<rect x="303" y="491" width="2" height="2" fill="#c04050"/>
<polyline points="298,471.5 318,471 322,469.5 324,471 330,470.5 333,469 336,471 346,471" fill="none" stroke="#4672b8" stroke-width="0.8"/>
<polyline points="352,482 358,469 398,468.5" fill="none" stroke="#2f4f80" stroke-width="0.7"/>
<polyline points="352,478 358,475.5 398,475" fill="none" stroke="#3f6fb0" stroke-width="0.7"/>
<polyline points="353,481 360,479.5 370,480.5 380,479.5 390,480 395,481.5 398,480.5" fill="none" stroke="#5a8ad8" stroke-width="0.7"/>
<path d="M298 508 V503 H300 V508 H302 V501 H305 V508 H307 V500 H310 V508 H312 V498 H315 V508 H317 V497 H320 V508 H322 V495 H326 V508 H328 V494 H332 V508 H334 V493 H337 V508 H339 V492 H343 V508" fill="none" stroke="#b8404c" stroke-width="0.8"/>
<path d="M352.5 509 V495.5 H398" fill="none" stroke="#4a78bf" stroke-width="0.9"/>
<path d="M351 468 V482 M351 495 V509" stroke="#8a8f9c" stroke-width="0.6"/>
<path d="M300 484.5 H345 M354 484.5 H398 M300 511.5 H345 M354 511.5 H398" stroke="#6a6f7c" stroke-width="0.8" stroke-dasharray="1 4.5"/>
<!-- network icon + grip -->
<defs><linearGradient id="scr" x1="0" y1="0" x2="0" y2="1"><stop offset="0" stop-color="#2a2af0"/><stop offset="1" stop-color="#0000a8"/></linearGradient></defs>
<rect x="7.5" y="569.5" width="9.5" height="7.5" fill="url(#scr)" stroke="#ece6c8"/>
<path d="M10.5 578.5 H14 M9 580.5 H15" stroke="#8a8a8a" stroke-width="1"/>
<rect x="12.5" y="572.5" width="9.5" height="7.5" fill="url(#scr)" stroke="#ece6c8"/>
<path d="M15 575 L20 573.5 V579 H15 Z" fill="#6a7af0" opacity="0.5"/>
<path d="M15.5 581.5 H19 M14 583.5 H20.5" stroke="#8a8a8a" stroke-width="1"/>
<g fill="#b8b8b8"><rect x="964" y="578" width="2" height="2"/><rect x="961" y="581" width="2" height="2"/><rect x="964" y="581" width="2" height="2"/><rect x="958" y="584" width="2" height="2"/><rect x="961" y="584" width="2" height="2"/><rect x="964" y="584" width="2" height="2"/></g>
</svg>

<div class="a" style="left:0;top:87px;width:198px;height:356px;border:3px solid #ec1c24"></div>
</body></html>
